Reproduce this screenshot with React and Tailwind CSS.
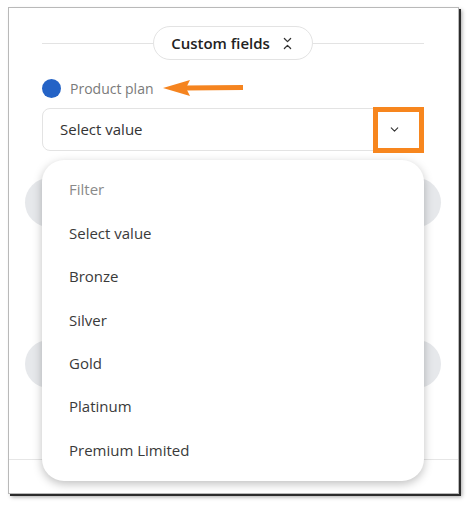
import React from 'react';
import { ChevronDown, ChevronsDownUp } from 'lucide-react';

const options = ['Select value', 'Bronze', 'Silver', 'Gold', 'Platinum', 'Premium Limited'];

const App = () => {
  return (
    <div className="w-[474px] h-[509px] bg-white pt-[7px] pl-[8px] font-['Open_Sans',sans-serif]">
      <div className="relative w-[451px] h-[487px] bg-white border border-[#b9b9b9] shadow-[2px_2px_0_#2b2b2b,3px_3px_4px_rgba(0,0,0,0.35)]">
        {/* Custom fields header */}
        <div className="flex items-center mt-[18px] pl-[33px] pr-[34px]">
          <div className="flex-1 h-px bg-[#e3e3e3]" />
          <div className="flex items-center gap-[10px] h-[34px] w-[160px] justify-center rounded-full border border-[#e3e3e3] text-[15px] font-semibold text-[#222]">
            <span>Custom fields</span>
            <ChevronsDownUp size={15} strokeWidth={2} className="text-[#333]" />
          </div>
          <div className="flex-1 h-px bg-[#e3e3e3]" />
        </div>

        <div className="pl-[33px] pr-[34px]">
          {/* label */}
          <div className="flex items-center mt-[18px] h-[20px]">
            <div className="w-[19px] h-[19px] rounded-full bg-[#2463c6]" />
            <span className="ml-[9px] text-[14px] text-[#7a7a7a]">Product plan</span>
            <svg width="82" height="20" viewBox="0 0 82 20" className="ml-[9px]">
              <path d="M22 7.5 L80 7 L80 12 L22 12.5 Z" fill="#f5841f" />
              <path d="M0 10 L27 2 L23 10 L27 18 Z" fill="#f5841f" />
            </svg>
          </div>

          {/* select */}
          <div className="relative mt-[10px] h-[43px] flex items-center rounded-lg border border-[#e3e3e3] pl-[17px] pr-[20px]">
            <span className="flex-1 text-[15px] text-[#333]">Select value</span>
            <ChevronDown size={13} strokeWidth={2} className="text-[#333] mr-[2px]" />
            <div className="absolute right-[-1px] top-[-2px] w-[51px] h-[46px] border-[5px] border-[#f7861e]" />
          </div>

          {/* background fields */}
          <div className="-mx-[17px] mt-[27px] h-[49px] rounded-full bg-[#e6e8eb]" />
          <div className="h-[113px] flex justify-end">
            <div className="mt-[43px] h-[28px] w-px border-r border-dashed border-[#9aa0a8]" />
          </div>
          <div className="-mx-[17px] h-[48px] rounded-full bg-[#e6e8eb]" />
        </div>

        <div className="mt-[71px] h-px bg-[#e6e6e6]" />

        {/* dropdown menu */}
        <div className="absolute left-[33px] top-[152px] w-[382px] rounded-[22px] bg-white pt-[8px] pb-[9px] shadow-[0_3px_10px_rgba(0,0,0,0.25)]">
          <div className="h-[43.4px] flex items-center pl-[27px] text-[15px] text-[#8a8a8a]">Filter</div>
          {options.map((o) => (
            <div key={o} className="h-[43.4px] flex items-center pl-[27px] text-[15px] text-[#3a3a3a]">
              {o}
            </div>
          ))}
        </div>
      </div>
    </div>
  );
};

export default App;
